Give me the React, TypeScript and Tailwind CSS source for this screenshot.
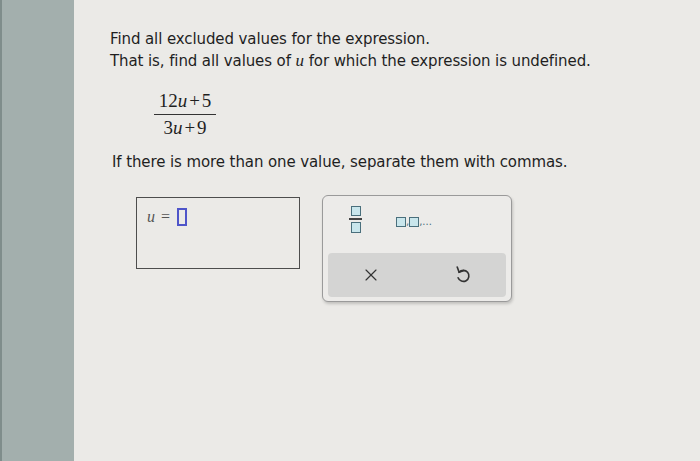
import { X } from 'lucide-react';

function Box({ className = '' }: { className?: string }) {
  return <span className={`inline-block border border-[#4a6f7c] bg-[#c9e6ec] ${className}`} />;
}

export default function App() {
  return (
    <div className="flex h-[461px] w-[700px] overflow-hidden bg-[#ebeae7] font-['DejaVu_Sans',Verdana,sans-serif] text-[#1f1f1f]">
      <div className="w-[74px] shrink-0 border-l-2 border-[#7f8d8b] bg-[#a3afad]" />

      <div className="flex-1 pl-[36px] pt-[29px]">
        <p className="text-[15px] leading-[21px] tracking-[-0.1px]">Find all excluded values for the expression.</p>
        <p className="text-[15px] leading-[21px] tracking-[-0.1px]">
          That is, find all values of <i className="font-['Liberation_Serif',serif] text-[17px]">u</i> for which the expression is undefined.
        </p>

        <div className="ml-[44px] mt-[19px] inline-flex flex-col items-center font-['Liberation_Serif',serif] text-[19px] leading-[20px]">
          <span className="px-[2px]">
            12<i>u</i>
            <span className="mx-[2px]">+</span>5
          </span>
          <span className="my-[3px] h-px w-[62px] bg-[#333]" />
          <span>
            3<i>u</i>
            <span className="mx-[2px]">+</span>9
          </span>
        </div>

        <p className="ml-[2px] mt-[14px] text-[15px] leading-[21px] tracking-[-0.1px]">
          If there is more than one value, separate them with commas.
        </p>

        <div className="mt-[24px] flex items-start gap-[22px] pl-[26px]">
          <div className="h-[72px] w-[164px] border border-[#4d4d4d] px-[10px] pt-[7px]">
            <div className="flex items-center gap-[6px] font-['Liberation_Serif',serif] text-[16px] text-[#555]">
              <i>u</i>
              <span>=</span>
              <span className="ml-[1px] inline-block h-[18px] w-[10px] border-2 border-[#4f55c9]" />
            </div>
          </div>

          <div className="mt-[-2px] h-[107px] w-[190px] rounded-[6px] border border-[#9a9a9a] bg-[#ecebe9] px-[5px] pt-[10px] shadow-[1px_2px_3px_rgba(0,0,0,0.18)]">
            <div className="flex h-[40px] items-start">
              <div className="ml-[21px] flex flex-col items-center gap-[2px]">
                <Box className="h-[10px] w-[10px]" />
                <span className="h-[1.5px] w-[13px] bg-[#444]" />
                <Box className="h-[11px] w-[10px]" />
              </div>
              <div className="ml-[34px] mt-[11px] flex items-end text-[10px] leading-none text-[#4a6f7c]">
                <Box className="h-[10px] w-[10px]" />
                <span>,</span>
                <Box className="h-[10px] w-[10px]" />
                <span>,...</span>
              </div>
            </div>
            <div className="mt-[7px] flex h-[44px] items-center rounded-[4px] bg-[#d4d4d3]">
              <X className="ml-[33px] h-[20px] w-[20px] text-[#333]" strokeWidth={1.4} />
              <svg className="ml-[73px]" width="18" height="20" viewBox="0 0 16 18" fill="none" stroke="#333" strokeWidth="1.5" strokeLinecap="round">
                <path d="M4.5 6.5 A5 5 0 1 1 3.6 11.5" />
                <path d="M4.5 1.5 L4.5 6.5 L9 6.5" transform="rotate(-20 4.5 6.5)" />
              </svg>
            </div>
          </div>
        </div>
      </div>
    </div>
  );
}
